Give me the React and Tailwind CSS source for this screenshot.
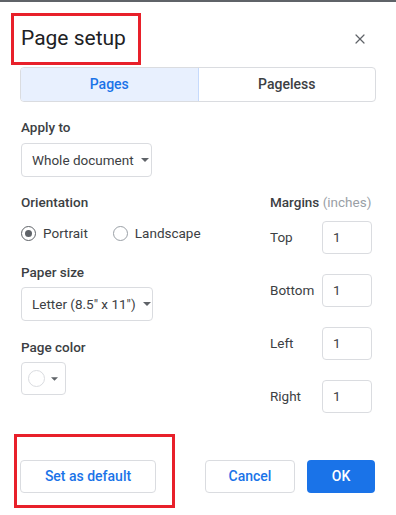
import { X } from 'lucide-react';

const Caret = () => (
  <svg width="8" height="4" viewBox="0 0 8 4" className="ml-[7px] shrink-0">
    <path d="M0 0h8L4 4z" fill="#5f6368" />
  </svg>
);

const Select = ({ label, width }) => (
  <div className={`h-[34px] ${width} flex items-center pl-[10px] border border-[#dadce0] rounded-[4px] text-[13.5px] text-[#3c4043] whitespace-nowrap`}>
    {label}
    <Caret />
  </div>
);

const Radio = ({ checked, label }) => (
  <div className="flex items-center">
    <div
      className={`w-[15px] h-[15px] rounded-full border flex items-center justify-center ${
        checked ? 'border-[#5f6368]' : 'border-[#9aa0a6]'
      }`}
    >
      {checked && <div className="w-[7px] h-[7px] rounded-full bg-[#5f6368]" />}
    </div>
    <span className="ml-[7px] text-[13.5px] text-[#3c4043]">{label}</span>
  </div>
);

const MarginRow = ({ label }) => (
  <div className="flex items-center h-[33px]">
    <span className="w-[52px] text-[13.5px] text-[#3c4043]">{label}</span>
    <div className="w-[50px] h-[33px] border border-[#dadce0] rounded-[4px] flex items-center pl-[10px] text-[13.5px] text-[#3c4043]">
      1
    </div>
  </div>
);

const Label = ({ children, className = '' }) => (
  <div className={`text-[13.5px] leading-[20px] font-medium text-[#3c4043] whitespace-nowrap ${className}`}>{children}</div>
);

export default function App() {
  return (
    <div
      className="w-[396px] h-[515px] bg-white border-t-2 border-[#5f6368] overflow-hidden"
      style={{ fontFamily: 'Roboto, "Open Sans", Arial, sans-serif' }}
    >
      {/* header */}
      <div className="flex items-center justify-between pr-[28px]">
        <div className="ml-[11px] mt-[11px] w-[130px] h-[52px] border-[3px] border-[#e8202a] flex items-center pl-[7px]">
          <h1 className="text-[21px] text-[#202124] whitespace-nowrap">Page setup</h1>
        </div>
        <X className="w-[16px] h-[16px] text-[#5f6368] mt-[11px]" strokeWidth={1.8} />
      </div>

      {/* segmented */}
      <div className="mx-[20px] mt-[2px] h-[35px] flex border border-[#dadce0] rounded-[4px] overflow-hidden">
        <div className="flex-1 flex items-center justify-center bg-[#e8f0fe] text-[#1a73e8] text-[14px] font-medium border-r border-[#c6dafc]">
          Pages
        </div>
        <div className="flex-1 flex items-center justify-center text-[#3c4043] text-[14px] font-medium">
          Pageless
        </div>
      </div>

      <div className="px-[21px]">
        <Label className="mt-[15px]">Apply to</Label>
        <div className="mt-[6px]">
          <Select label="Whole document" width="w-[131px]" />
        </div>

        <div className="flex mt-[15px]">
          <div className="w-[249px] shrink-0">
            <Label>Orientation</Label>
            <div className="flex items-center gap-[25px] mt-[11px] h-[20px]">
              <Radio checked label="Portrait" />
              <Radio label="Landscape" />
            </div>
            <Label className="mt-[19px]">Paper size</Label>
            <div className="mt-[5px]">
              <Select label={'Letter (8.5" x 11")'} width="w-[132px]" />
            </div>
            <Label className="mt-[16px]">Page color</Label>
            <div className="mt-[5px] w-[45px] h-[33px] border border-[#dadce0] rounded-[4px] flex items-center pl-[6px]">
              <div className="w-[17px] h-[17px] rounded-full border border-[#dadce0]" />
              <svg width="7" height="4" viewBox="0 0 8 4" className="ml-[6px]">
                <path d="M0 0h8L4 4z" fill="#5f6368" />
              </svg>
            </div>
          </div>

          <div>
            <div className="text-[13.5px] leading-[20px] text-[#3c4043] whitespace-nowrap">
              <span className="font-medium">Margins</span>{' '}
              <span className="text-[#9aa0a6]">(inches)</span>
            </div>
            <div className="mt-[9px] flex flex-col gap-[20px]">
              <MarginRow label="Top" />
              <MarginRow label="Bottom" />
              <MarginRow label="Left" />
              <MarginRow label="Right" />
            </div>
          </div>
        </div>
      </div>

      {/* footer */}
      <div className="flex items-end mt-[21px]">
        <div className="ml-[14px] w-[161px] h-[74px] border-[3px] border-[#e8202a] pl-[3px] pt-[23px]">
          <button className="w-[136px] h-[33px] border border-[#dadce0] rounded-[4px] text-[14px] font-medium text-[#1a73e8]">
            Set as default
          </button>
        </div>
        <div className="flex gap-[12px] ml-[30px] mb-[15px]">
          <button className="w-[90px] h-[33px] border border-[#dadce0] rounded-[4px] text-[14px] font-medium text-[#1a73e8]">
            Cancel
          </button>
          <button className="w-[68px] h-[33px] rounded-[4px] bg-[#1a73e8] text-[14px] font-medium text-white">
            OK
          </button>
        </div>
      </div>
    </div>
  );
}
